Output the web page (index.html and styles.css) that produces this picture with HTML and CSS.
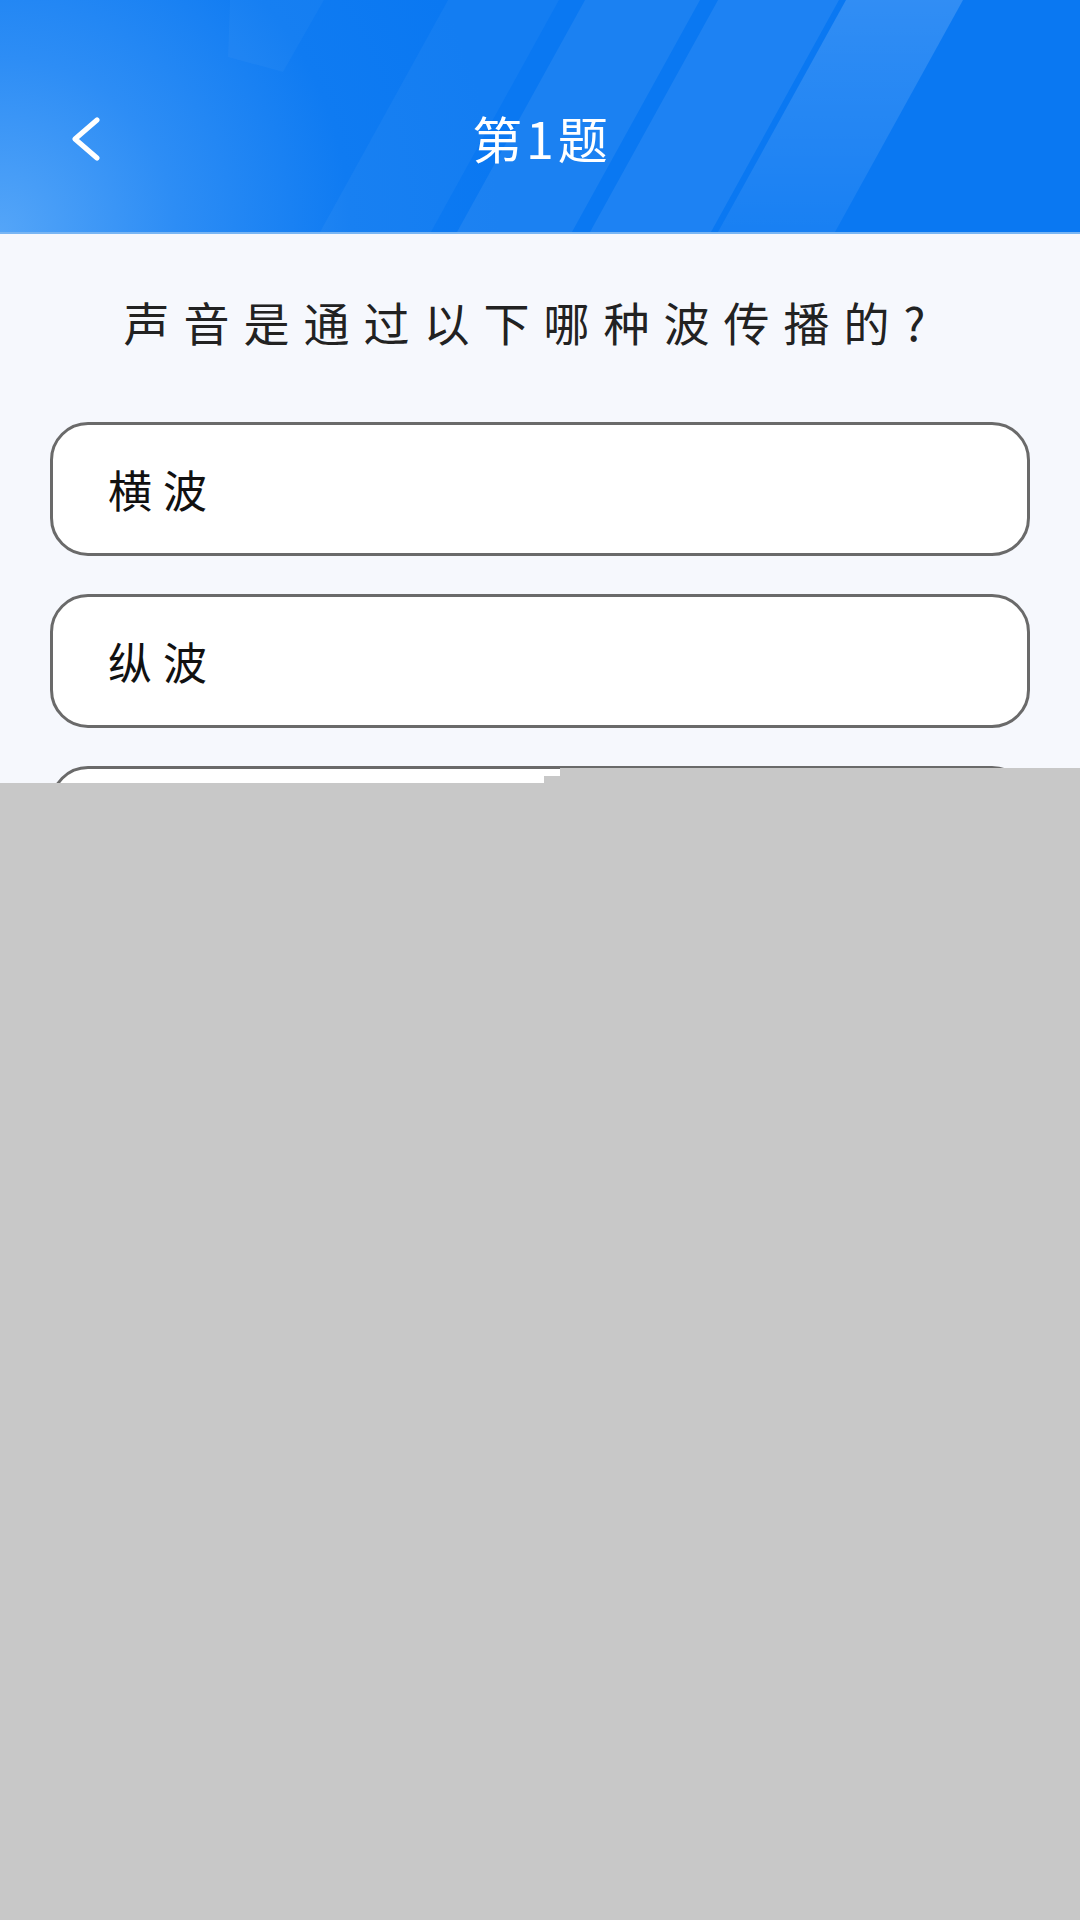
FILE: index.html
```html
<!DOCTYPE html>
<html lang="zh-CN">
<head>
<meta charset="utf-8">
<title>第1题</title>
<link rel="stylesheet" href="styles.css">
</head>
<body>
<div class="app">
  <header class="topbar">
    <svg class="topbar-bg" viewBox="0 0 1080 232" preserveAspectRatio="none" aria-hidden="true">
      <defs>
        <radialGradient id="glow" gradientUnits="userSpaceOnUse" cx="0" cy="232" r="500">
          <stop offset="0" stop-color="#54a5f8"/>
          <stop offset="0.35" stop-color="#2d8df5"/>
          <stop offset="0.7" stop-color="#0f7bf2"/>
          <stop offset="1" stop-color="#0a78f2"/>
        </radialGradient>
        <linearGradient id="band" x1="0" y1="0" x2="0" y2="1">
          <stop offset="0" stop-color="#ffffff" stop-opacity="0.16"/>
          <stop offset="1" stop-color="#ffffff" stop-opacity="0.06"/>
        </linearGradient>
      </defs>
      <rect x="0" y="0" width="1080" height="232" fill="#0877f3"/>
      <rect x="0" y="0" width="1080" height="232" fill="url(#glow)"/>
      <polygon points="230,0 324,0 283,72 228,57" fill="#ffffff" fill-opacity="0.03"/>
      <polygon points="448,0 559,0 431,232 320,232" fill="#ffffff" fill-opacity="0.04"/>
      <polygon points="585,0 700,0 572,232 457,232" fill="#ffffff" fill-opacity="0.07"/>
      <polygon points="718,0 839,0 711,232 590,232" fill="#ffffff" fill-opacity="0.08"/>
      <polygon points="846,0 963,0 835,232 718,232" fill="url(#band)"/>
    </svg>
    <div class="topbar-left">
      <svg class="back" viewBox="0 0 32 44" aria-hidden="true">
        <polyline points="27,3 5,22 27,41" fill="none" stroke="#ffffff" stroke-width="5" stroke-linecap="round" stroke-linejoin="round"/>
      </svg>
    </div>
    <h1 class="title">第1题</h1>
    <div class="topbar-right"></div>
  </header>

  <main class="content">
    <p class="question">声音是通过以下哪种波传播的?</p>
    <ul class="options">
      <li class="option"><span class="option-text">横波</span></li>
      <li class="option"><span class="option-text">纵波</span></li>
      <li class="option"><span class="option-text">电磁波</span></li>
      <li class="option"><span class="option-text">引力波</span></li>
    </ul>
  </main>

  <div class="mask" aria-hidden="true">
    <div class="mask-a"></div>
    <div class="mask-b"></div>
    <div class="mask-c"></div>
  </div>
</div>
</body>
</html>
```

FILE: styles.css
```css
* {
  box-sizing: border-box;
}

html, body {
  margin: 0;
  padding: 0;
}

body {
  width: 1080px;
  height: 1920px;
  overflow: hidden;
  background: #f6f8fd;
  font-family: "Noto Sans CJK SC", "Noto Sans", sans-serif;
}

.app {
  position: relative;
  width: 1080px;
  height: 1920px;
  background: #f6f8fd;
}

.topbar {
  position: relative;
  height: 234px;
  padding-top: 44px;
  padding-bottom: 2px;
  border-bottom: 2px solid #79b6f4;
  display: grid;
  grid-template-columns: 1fr auto 1fr;
  align-items: center;
  overflow: hidden;
}

.topbar-bg {
  position: absolute;
  left: 0;
  top: 0;
  width: 1080px;
  height: 232px;
  z-index: 0;
}

.topbar-left,
.title,
.topbar-right {
  position: relative;
  z-index: 1;
}

.topbar-left {
  display: flex;
  align-items: center;
  padding-left: 70px;
  padding-top: 4px;
}

.back {
  width: 32px;
  height: 44px;
  display: block;
}

.title {
  margin: 0;
  padding-left: 4px;
  color: #ffffff;
  font-size: 50px;
  font-weight: 400;
  line-height: 60px;
  letter-spacing: 4px;
}

.content {
  padding: 59px 50px 0 50px;
}

.question {
  margin: 0 10px;
  padding-right: 17px;
  height: 57px;
  font-size: 46px;
  line-height: 57px;
  letter-spacing: 14px;
  text-align: center;
  color: #222222;
  white-space: nowrap;
}

.options {
  list-style: none;
  margin: 72px 0 0 0;
  padding: 0;
  display: flex;
  flex-direction: column;
  gap: 38px;
}

.option {
  height: 134px;
  border: 3px solid #6a6a6a;
  border-radius: 38px;
  background: #ffffff;
  display: flex;
  align-items: center;
  padding-left: 55px;
}

.option-text {
  font-size: 44px;
  line-height: 57px;
  letter-spacing: 11px;
  color: #111111;
}

.mask-a,
.mask-b,
.mask-c {
  position: absolute;
  right: 0;
  bottom: 0;
  background: #c8c8c8;
}

.mask-a {
  top: 768px;
  left: 560px;
}

.mask-b {
  top: 776px;
  left: 544px;
}

.mask-c {
  top: 783px;
  left: 0;
}
```
